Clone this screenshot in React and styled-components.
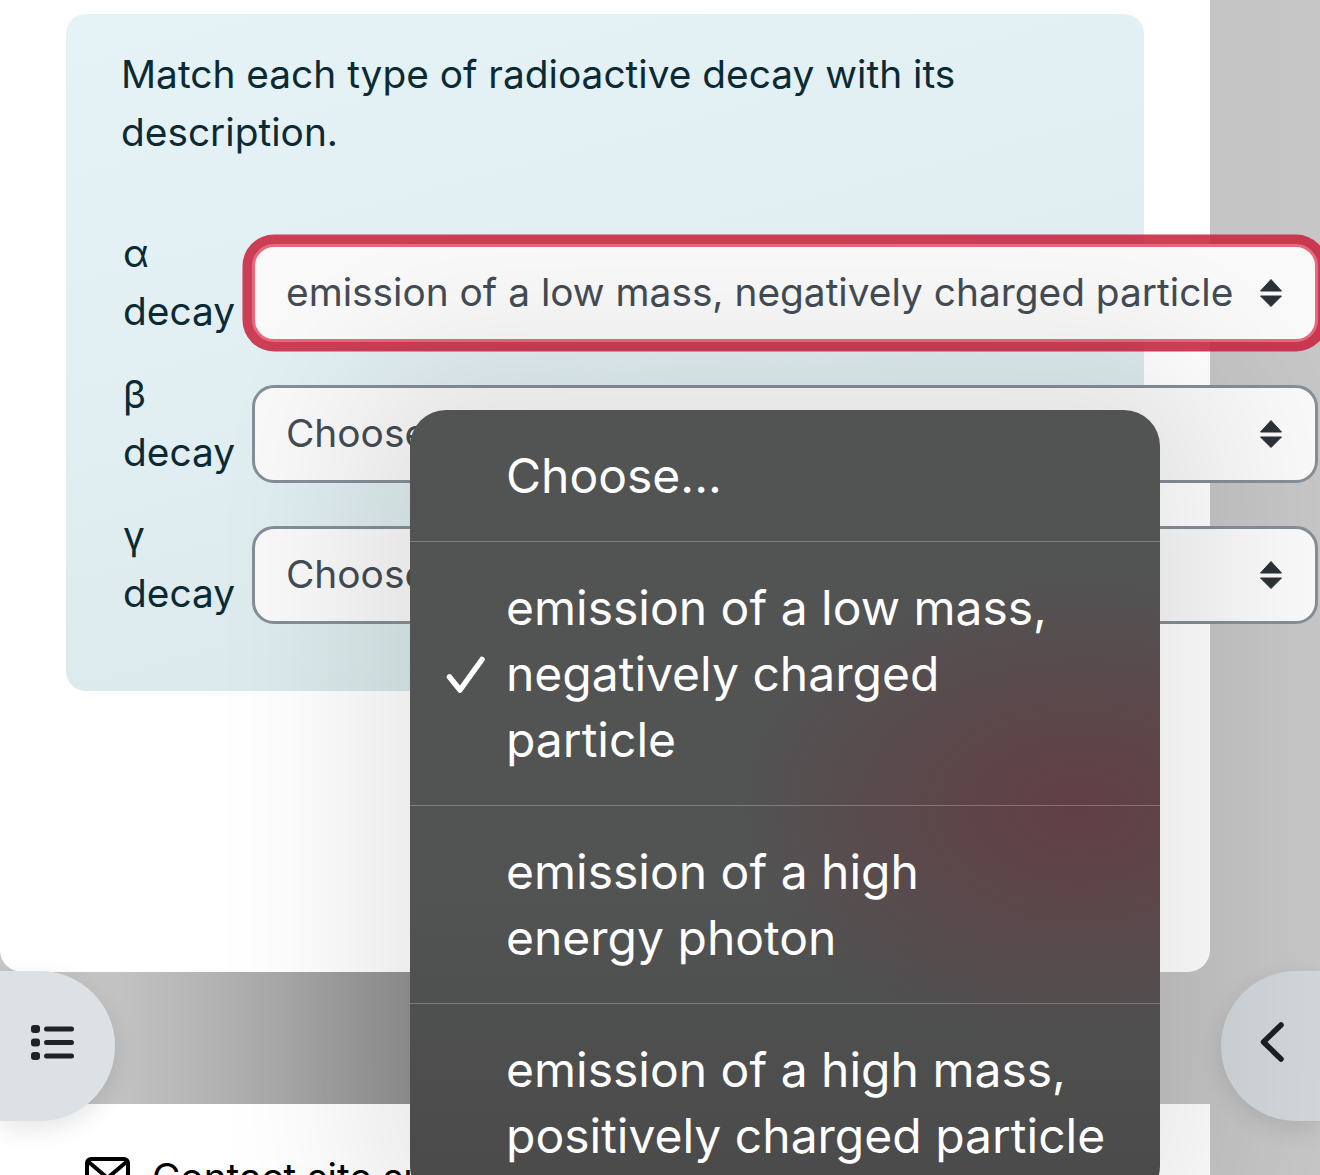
import React from "react";
import styled, { createGlobalStyle } from "styled-components";

const GlobalStyle = createGlobalStyle`
  html, body {
    margin: 0;
    padding: 0;
  }
  body {
    font-family: Inter, "Noto Sans", "Liberation Sans", sans-serif;
  }
`;

const Page = styled.div`
  position: relative;
  width: 1320px;
  height: 1175px;
  overflow: hidden;
  background: linear-gradient(90deg, #c6c6c6 0, #c2c2c2 120px, #939393 410px, #c4c4c4 1160px, #c6c6c6 100%);
`;

const Card = styled.main`
  box-sizing: border-box;
  width: 1210px;
  height: 972px;
  padding: 14px 66px 0;
  background: #fff;
  border-radius: 0 0 22px 22px;
`;

const Question = styled.section`
  box-sizing: border-box;
  width: 1078px;
  height: 677px;
  padding: 31px 40px 0 55px;
  background: linear-gradient(165deg, #e5f2f6 0%, #e2eff2 45%, #d6e5e7 100%);
  border-radius: 20px;
  color: #0b2a33;
  font-size: 38.85px;
  line-height: 58px;
`;

const Prompt = styled.p`
  margin: 0 0 65px;
`;

const Rows = styled.div`
  display: flex;
  flex-direction: column;
  gap: 25px;
`;

const Row = styled.div`
  display: flex;
  align-items: flex-end;
  height: 116px;
`;

const Label = styled.label`
  flex: 0 0 131px;
  box-sizing: border-box;
  padding: 0 0 2px 2px;
`;

const Select = styled.div`
  box-sizing: border-box;
  flex: 0 0 1066px;
  display: flex;
  align-items: center;
  justify-content: space-between;
  height: 98px;
  padding: 0 33px 2px 31px;
  background: #f9f9f9;
  border: 3px solid ${(p) => (p.$focused ? "#e8697c" : "#868e98")};
  border-radius: 22px;
  color: #434c54;
  font-size: 38.85px;
  box-shadow: ${(p) => (p.$focused ? "0 0 0 9.5px rgba(200, 35, 62, 0.87)" : "none")};
`;

const SortIcon = styled.svg`
  flex: none;
  width: 24px;
  height: 30px;
  margin: 2px -1px 0 0;
  fill: #2a3236;
`;

const Footer = styled.footer`
  box-sizing: border-box;
  display: flex;
  align-items: flex-start;
  gap: 22px;
  width: 1210px;
  height: 71px;
  margin-top: 132px;
  padding: 50px 0 0 85px;
  background: #fff;
  color: #000;
  font-size: 38.85px;
  line-height: 46px;
  white-space: nowrap;
`;

const MailIcon = styled.svg`
  flex: none;
  width: 45px;
  height: 36px;
  margin-top: 3px;
`;

const SideButton = styled.button`
  position: absolute;
  top: 971px;
  ${(p) => (p.$side === "left" ? "left: 0; width: 115px;" : "right: 0; width: 99px;")}
  height: 150px;
  display: flex;
  align-items: center;
  padding: 0 0 8px;
  border: 0;
  background: ${(p) => (p.$side === "left" ? "#dce1e6" : "#d0d6da")};
  border-radius: ${(p) => (p.$side === "left" ? "0 75px 75px 0" : "75px 0 0 75px")};
  box-shadow: 0 8px 24px rgba(0, 0, 0, 0.1);
`;

const ListIcon = styled.svg`
  width: 46px;
  height: 38px;
  margin-left: 30px;
`;

const ChevronIcon = styled.svg`
  width: 26px;
  height: 42px;
  margin-left: 38px;
`;

const Popup = styled.div`
  position: absolute;
  left: 410px;
  top: 410px;
  width: 750px;
  height: 792px;
  border-radius: 36px;
  color: #fff;
  font-size: 48px;
  line-height: 66px;
  background:
    radial-gradient(ellipse 340px 230px at 670px 400px, #623f45 0%, rgba(98, 63, 69, 0.7) 35%, rgba(98, 63, 69, 0) 100%),
    linear-gradient(180deg, #525353 0%, #525353 60%, #4a4a4a 100%);
  box-shadow: 0 0 150px 60px rgba(0, 0, 0, 0.09);
`;

const Option = styled.div`
  position: relative;
  padding: 33px 40px 33px 96px;
  & + & {
    border-top: 1px solid rgba(255, 255, 255, 0.25);
    margin-top: -1px;
  }
`;

const CheckIcon = styled.svg`
  position: absolute;
  left: 36px;
  top: 114px;
  width: 40px;
  height: 38px;
`;

const options = [
  { key: "choose", lines: ["Choose..."] },
  { key: "beta", lines: ["emission of a low mass,", "negatively charged", "particle"], checked: true },
  { key: "gamma", lines: ["emission of a high", "energy photon"] },
  { key: "alpha", lines: ["emission of a high mass,", "positively charged particle"] },
];

const rows = [
  { name: "α", value: "emission of a low mass, negatively charged particle", focused: true },
  { name: "β", value: "Choose..." },
  { name: "γ", value: "Choose..." },
];

function Sort() {
  return (
    <SortIcon viewBox="0 0 24 30">
      <path d="M12 1.5 L22.5 13 H1.5 Z" strokeLinejoin="round" stroke="#2a3236" strokeWidth="1" />
      <path d="M1.5 18 H22.5 L12 28.5 Z" strokeLinejoin="round" stroke="#2a3236" strokeWidth="1" />
    </SortIcon>
  );
}

export default function App() {
  return (
    <Page>
      <GlobalStyle />
      <Card>
        <Question>
          <Prompt>
            Match each type of radioactive decay with its description.
          </Prompt>
          <Rows>
            {rows.map((row) => (
              <Row key={row.name}>
                <Label>
                  {row.name}
                  <br />
                  decay
                </Label>
                <Select $focused={row.focused}>
                  <span>{row.value}</span>
                  <Sort />
                </Select>
              </Row>
            ))}
          </Rows>
        </Question>
      </Card>
      <Footer>
        <MailIcon viewBox="0 0 45 36" fill="none" stroke="#000" strokeWidth="4">
          <rect x="2" y="2" width="41" height="32" rx="4" />
          <path d="M2.5 4 L22.5 21 L42.5 4" />
        </MailIcon>
        Contact site support
      </Footer>
      <SideButton $side="left" aria-label="Contents">
        <ListIcon viewBox="0 0 46 38" fill="#1f2327">
          <rect x="1" y="2" width="9" height="8" rx="3" />
          <rect x="1" y="15.5" width="9" height="8" rx="3" />
          <rect x="1" y="29" width="9" height="8" rx="3" />
          <rect x="14" y="3.5" width="30" height="5" rx="2.5" />
          <rect x="14" y="17" width="30" height="5" rx="2.5" />
          <rect x="14" y="30.5" width="30" height="5" rx="2.5" />
        </ListIcon>
      </SideButton>
      <SideButton $side="right" aria-label="Back">
        <ChevronIcon viewBox="0 0 26 42" fill="none" stroke="#1b2024" strokeWidth="5.5" strokeLinecap="round" strokeLinejoin="round">
          <path d="M22 4 L4.5 21 L22 38" />
        </ChevronIcon>
      </SideButton>
      <Popup>
        {options.map((option) => (
          <Option key={option.key}>
            {option.checked && (
              <CheckIcon viewBox="0 0 40 38" fill="none" stroke="#fff" strokeWidth="5.5" strokeLinecap="round" strokeLinejoin="round">
                <path d="M3.5 21 L14 34 L36 3.5" />
              </CheckIcon>
            )}
            {option.lines.map((line) => (
              <div key={line}>{line}</div>
            ))}
          </Option>
        ))}
      </Popup>
    </Page>
  );
}
